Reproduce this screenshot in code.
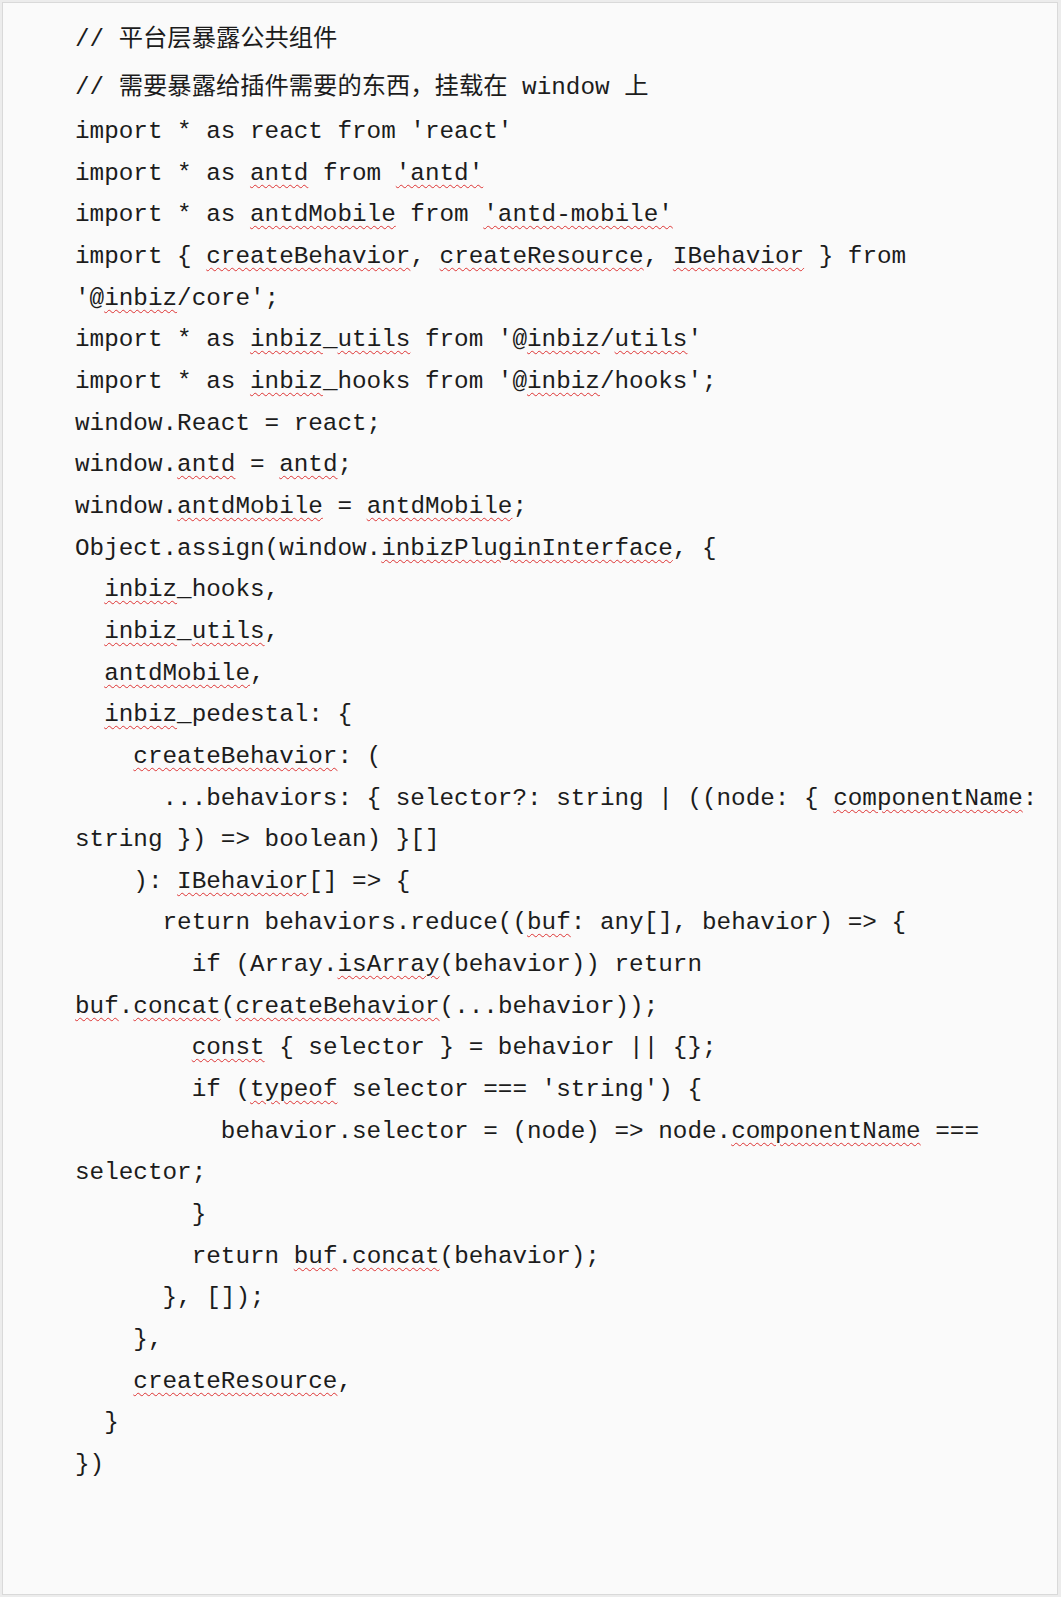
const headLines = [
  { text: "// 平台层暴露公共组件", cls: "h-[50px] leading-[50px]" },
  { text: "// 需要暴露给插件需要的东西，挂载在 window 上", cls: "h-[46px] leading-[46px]" },
];

// ~word~ marks the spell-checker squiggle seen in the screenshot
const codeLines = [
  "import * as react from 'react'",
  "import * as ~antd~ from ~'antd'~",
  "import * as ~antdMobile~ from ~'antd-mobile'~",
  "import { ~createBehavior~, ~createResource~, ~IBehavior~ } from '@~inbiz~/core';",
  "import * as ~inbiz~_~utils~ from '@~inbiz~/~utils~'",
  "import * as ~inbiz~_hooks from '@~inbiz~/hooks';",
  "window.React = react;",
  "window.~antd~ = ~antd~;",
  "window.~antdMobile~ = ~antdMobile~;",
  "Object.assign(window.~inbizPluginInterface~, {",
  "  ~inbiz~_hooks,",
  "  ~inbiz~_~utils~,",
  "  ~antdMobile~,",
  "  ~inbiz~_pedestal: {",
  "    ~createBehavior~: (",
  "      ...behaviors: { selector?: string | ((node: { ~componentName~: string }) => boolean) }[]",
  "    ): ~IBehavior~[] => {",
  "      return behaviors.reduce((~buf~: any[], behavior) => {",
  "        if (Array.~isArray~(behavior)) return ~buf~.~concat~(~createBehavior~(...behavior));",
  "        ~const~ { selector } = behavior || {};",
  "        if (~typeof~ selector === 'string') {",
  "          behavior.selector = (node) => node.~componentName~ === selector;",
  "        }",
  "        return ~buf~.~concat~(behavior);",
  "      }, []);",
  "    },",
  "    ~createResource~,",
  "  }",
  "})",
];

const Line = ({ text }: { text: string }) => {
  const parts = text.split("~");
  return (
    <div>
      {parts.map((p, i) =>
        i % 2 === 1 ? (
          <span
            key={i}
            className="underline decoration-wavy decoration-[#d33] decoration-[1px] underline-offset-[4px]"
          >
            {p}
          </span>
        ) : (
          <span key={i}>{p}</span>
        )
      )}
    </div>
  );
};

export default function App() {
  return (
    <div className="w-[1061px] h-[1597px] bg-[#ececec] p-[2px] pr-[3px] pb-[2px]">
      <div
        className="h-full border border-[#d9d9d9] bg-[#fafafa] pl-[72px] pr-[7px] pt-[12px] text-[24.3px] text-[#1c1c1c] whitespace-pre-wrap"
        style={{ fontFamily: '"Liberation Mono", "Noto Sans CJK SC", monospace' }}
      >
        {headLines.map((l) => (
          <div key={l.text} className={l.cls}>
            {l.text}
          </div>
        ))}
        <div className="leading-[41.65px]">
          {codeLines.map((l, i) => (
            <Line key={i} text={l} />
          ))}
        </div>
      </div>
    </div>
  );
}
